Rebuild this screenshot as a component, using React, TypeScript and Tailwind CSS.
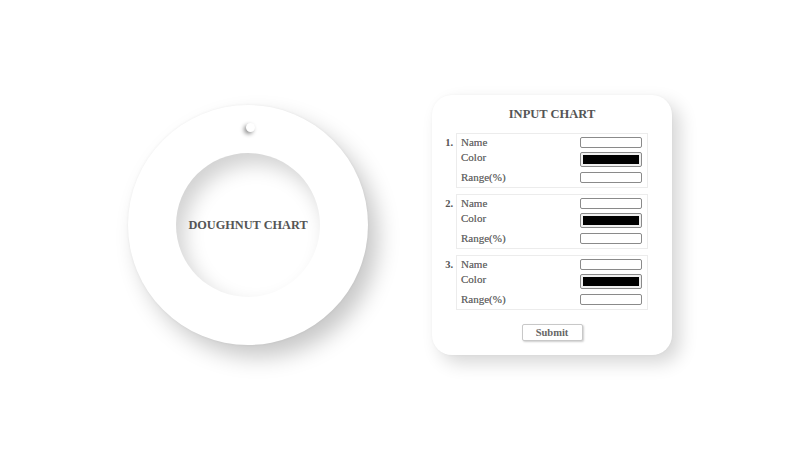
import React from "react";

const serif = { fontFamily: '"Liberation Serif", "Times New Roman", serif' };

function Label({ children }: { children: React.ReactNode }) {
  return (
    <span className="text-[11px] leading-[11px] text-[#6e6e6e] [text-shadow:0_0_0.6px_rgba(80,80,80,0.8)]">
      {children}
    </span>
  );
}

function Item({ n }: { n: number }) {
  return (
    <div className="flex">
      <div className="w-[24px] pr-[3px] text-right text-[10.5px] font-bold leading-[11px] text-[#555] pt-[4px]">
        {n}.
      </div>
      <div className="flex-1 border border-[#ececec] pl-[4px] pr-[5px] pt-[3px] pb-[4px]">
        <div className="flex h-[11px] items-center justify-between">
          <Label>Name</Label>
          <div className="h-[11px] w-[62px] rounded-[2px] border border-[#8a8a8a] bg-white" />
        </div>
        <div className="mt-[4px] flex h-[15px] items-start justify-between">
          <Label>Color</Label>
          <div className="h-[15px] w-[62px] rounded-[2px] border border-[#8a8a8a] bg-[#f0f0f0] p-[2px]">
            <div className="h-full w-full bg-black" />
          </div>
        </div>
        <div className="mt-[5px] flex h-[11px] items-center justify-between">
          <Label>Range(%)</Label>
          <div className="h-[11px] w-[62px] rounded-[2px] border border-[#8a8a8a] bg-white" />
        </div>
      </div>
    </div>
  );
}

export default function App() {
  return (
    <div className="flex h-[450px] w-full items-center justify-center gap-[64px] bg-white" style={serif}>
      <div className="relative flex h-[240px] w-[240px] items-center justify-center rounded-full bg-white shadow-[10px_12px_22px_rgba(0,0,0,0.22),0_0_3px_rgba(0,0,0,0.06)]">
        <div className="flex h-[144px] w-[144px] items-center justify-center rounded-full bg-white shadow-[inset_8px_11px_20px_rgba(0,0,0,0.18)]">
          <span className="text-[12.3px] font-bold text-[#555] whitespace-nowrap">DOUGHNUT CHART</span>
        </div>
        <div className="absolute left-[118px] top-[18px] h-[9px] w-[9px] rounded-full bg-white shadow-[-2px_2px_4px_rgba(0,0,0,0.45)]" />
      </div>
      <div className="flex w-[240px] flex-col rounded-[20px] bg-white pb-[14px] pl-[0px] pr-[24px] pt-[12px] shadow-[8px_8px_18px_rgba(0,0,0,0.16),0_0_3px_rgba(0,0,0,0.04)]">
        <div className="pl-[24px] text-center text-[12.5px] font-bold leading-[14px] text-[#555]">INPUT CHART</div>
        <div className="mt-[12px] flex flex-col gap-[6px]">
          <Item n={1} />
          <Item n={2} />
          <Item n={3} />
        </div>
        <div className="mt-[14px] flex justify-center pl-[24px]">
          <div className="flex h-[17px] w-[61px] items-center justify-center rounded-[2px] border border-[#c8c8c8] bg-white text-[10.5px] font-bold text-[#666] shadow-[1px_1px_2px_rgba(0,0,0,0.2)]">
            Submit
          </div>
        </div>
      </div>
    </div>
  );
}
